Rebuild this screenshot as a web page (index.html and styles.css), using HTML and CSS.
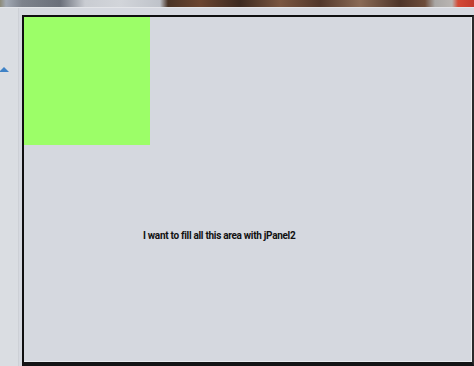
FILE: index.html
```html
<!DOCTYPE html>
<html>
<head>
<meta charset="utf-8">
<link rel="stylesheet" href="styles.css">
</head>
<body>
<div class="strip"></div>
<div class="main">
  <div class="gutter">
    <div class="arrow"></div>
  </div>
  <div class="panel">
    <div class="green"></div>
    <div class="label">I want to fill all this area with jPanel2</div>
  </div>
</div>
</body>
</html>
```
FILE: styles.css
```css
html, body {
  margin: 0;
  padding: 0;
  width: 474px;
  height: 366px;
  overflow: hidden;
  background: #d6d9e0;
}
.strip {
  height: 7px;
  background: linear-gradient(90deg,
    #8c8a78 0px, #a2a9b4 6px, #7d828c 22px, #6a6f7a 60px, #c9ccd2 85px,
    #d2d5da 120px, #bfc3ca 160px, #4a3426 168px, #6b4530 200px, #3d2a20 240px,
    #7a5640 280px, #52372a 320px, #8a6a55 360px, #4e3428 400px, #6d4c3a 425px,
    #a9a7a5 435px, #b9b5b2 452px, #d44a36 458px, #c23a2c 474px);
  border-bottom: 1px solid #e3e5e9;
}
.main {
  display: flex;
  height: 358px;
}
.gutter {
  width: 19px;
  margin-right: 3px;
  background: #dadde2;
  border-right: 1px solid #cdd0d6;
  position: relative;
  box-sizing: border-box;
}
.arrow {
  position: absolute;
  left: -1px;
  top: 59px;
  width: 0;
  height: 0;
  border-left: 5px solid transparent;
  border-right: 5px solid transparent;
  border-bottom: 5px solid #3f82c6;
  filter: blur(0.4px);
}
.panel {
  flex: 1;
  margin-top: 7px;
  border: 2px solid #0f0f10;
  border-right-color: #2a2a2c;
  border-bottom: 4px solid #141416;
  height: 345px;
  background: #d5d8df;
  box-shadow: inset -1px -1px 0 #e8eaee;
}
.green {
  width: 126px;
  height: 128px;
  background: #9cfe68;
}
.label {
  margin-top: 84px;
  margin-left: 119px;
  font-family: Roboto, "Open Sans", sans-serif;
  font-weight: 700;
  font-size: 10px;
  letter-spacing: -0.3px;
  line-height: 14px;
  color: #111;
  white-space: nowrap;
}
```
